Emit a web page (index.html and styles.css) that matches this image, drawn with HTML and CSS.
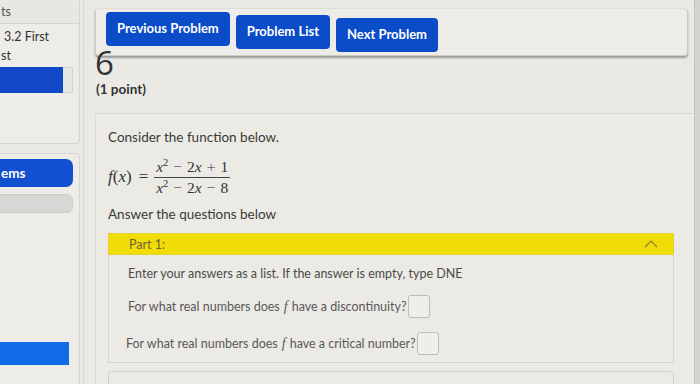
FILE: index.html
```html
<!DOCTYPE html>
<html lang="en">

<head>
  <meta charset="UTF-8" />
  <meta name="viewport" content="width=device-width, initial-scale=1.0" />
  <title>Problem 6</title>
  <link rel="stylesheet" href="styles.css">
</head>

<body>
  <div class="page">
    <div class="sidebar">
      <div class="side-panel first">
        <div class="side-head">ts</div>
        <div class="side-body">
          <p class="set-name"><span class="indent">3.2 First</span><br>st</p>
          <div class="progress">
            <div class="progress-bar"></div>
            <div class="progress-rest"></div>
          </div>
        </div>
      </div>
      <div class="side-panel second">
        <a class="side-btn" href="javascript:;">ems</a>
        <div class="side-grey"></div>
        <div class="side-space"></div>
        <div class="side-blue"></div>
      </div>
    </div>

    <div class="main">
      <div class="nav">
        <a class="btn" href="javascript:;">Previous Problem</a>
        <a class="btn" href="javascript:;">Problem List</a>
        <a class="btn" href="javascript:;">Next Problem</a>
      </div>
      <div class="num">6</div>
      <div class="points">(1 point)</div>

      <div class="problem">
        <p>Consider the function below.</p>
        <div class="formula">
          <span class="math">f</span>(<span class="math">x</span>)
          <span class="eq">=</span>
          <span class="frac">
            <span class="top"><span class="math">x</span><sup>2</sup><span class="op">&minus;</span>2<span class="math">x</span><span class="op">+</span>1</span>
            <span class="bot"><span class="math">x</span><sup>2</sup><span class="op">&minus;</span>2<span class="math">x</span><span class="op">&minus;</span>8</span>
          </span>
        </div>
        <p class="answer">Answer the questions below</p>

        <div class="part-head">
          <span>Part 1:</span>
          <svg class="chev" width="14" height="8" viewBox="0 0 14 8"><path d="M1 7 L7 1 L13 7" fill="none" stroke="#8a7f30" stroke-width="1.2"/></svg>
        </div>
        <div class="part-body">
          <p class="hint">Enter your answers as a list. If the answer is empty, type DNE</p>
          <p class="q">For what real numbers does <span class="math">f</span> have a discontinuity?<span class="box"></span></p>
          <p class="q q2">For what real numbers does <span class="math">f</span> have a critical number?<span class="box"></span></p>
        </div>
        <div class="part-next"></div>
      </div>
    </div>
    <div class="scroll"></div>
  </div>
</body>

</html>
```

FILE: styles.css
```css
* {
  margin: 0;
  padding: 0;
  box-sizing: border-box;
}

body {
  width: 700px;
  height: 384px;
  overflow: hidden;
  background: #ebe9e4;
  font-family: Lato, "Open Sans", sans-serif;
  color: #3a3a3a;
}

.page {
  display: flex;
  height: 384px;
}

/* left column */
.sidebar {
  width: 84px;
  flex-shrink: 0;
  overflow: hidden;
  border-right: 1px solid #d8d6d1;
  padding-right: 4px;
}

.side-panel {
  margin-left: -12px;
  width: 92px;
  background: #edece8;
  border: 1px solid #d6d4cf;
  border-radius: 4px;
}

.side-panel.first {
  height: 146px;
  margin-top: -2px;
}

.side-head {
  height: 25px;
  line-height: 26px;
  font-size: 12.5px;
  color: #555;
  border-bottom: 1px solid #d6d4cf;
  padding-left: 12px;
  background: #e8e7e2;
}

.side-body {
  padding: 3px 0 0 12px;
}

.set-name {
  font-size: 12.5px;
  line-height: 19px;
  color: #333;
  white-space: nowrap;
}

.set-name .indent {
  padding-left: 3px;
}

.progress {
  display: flex;
  margin: 2px 0 0 -12px;
  height: 26px;
}

.progress-bar {
  width: 74px;
  background: #1048c6;
}

.progress-rest {
  width: 10px;
  border: 1px solid #d4d2cd;
  border-left: none;
  background: #e6e5e1;
}

.side-panel.second {
  margin-top: 9px;
  height: 240px;
  padding-top: 5px;
}

.side-btn {
  display: block;
  width: 84px;
  height: 28px;
  line-height: 28px;
  border-radius: 0 7px 7px 0;
  background: #1150d0;
  color: #fff;
  font-weight: bold;
  font-size: 13.5px;
  text-decoration: none;
  padding-left: 12px;
}

.side-grey {
  width: 84px;
  height: 19px;
  margin-top: 7px;
  border-radius: 0 6px 6px 0;
  background: #d8d7d6;
  border: 1px solid #cfcdca;
}

.side-space {
  height: 129px;
}

.side-blue {
  width: 80px;
  height: 23px;
  background: #116ae6;
}

/* main area */
.main {
  flex: 1;
  padding: 8px 6px 0 11px;
}

.nav {
  display: flex;
  gap: 6px;
  align-items: center;
  height: 48px;
  padding: 0 0 0 10px;
  border: 1px solid #cdcbc6;
  border-top-color: #e0ded9;
  border-radius: 4px;
  background: #edece8;
  box-shadow: 0 2px 2px rgba(60, 60, 70, 0.45);
}

.btn {
  display: block;
  padding: 0 11px;
  height: 34px;
  line-height: 33px;
  background: #0b4cc8;
  color: #fff;
  font-size: 13px;
  font-weight: bold;
  text-decoration: none;
  border-radius: 4px;
}

.btn:nth-child(1) {
  margin-top: -6px;
}

.btn:nth-child(3) {
  margin-top: 6px;
}

.num {
  font-family: "Open Sans", sans-serif;
  font-size: 33px;
  line-height: 30px;
  height: 30px;
  margin-top: -8px;
  width: 24px;
  color: #333;
}

.points {
  font-size: 13.5px;
  font-weight: bold;
  color: #333;
  line-height: 19px;
  margin-top: 2px;
  padding-left: 1px;
}

.problem {
  margin-top: 14px;
  margin-right: -10px;
  border-top: 1px solid #d8d6d1;
  border-left: 1px solid #dcdad5;
  background: #eceae5;
  padding: 14px 24px 0 12px;
  height: 280px;
}

.problem p {
  font-size: 13.5px;
  line-height: 19px;
  color: #3a3a3a;
}

.formula {
  display: flex;
  align-items: center;
  font-family: "Liberation Serif", serif;
  font-size: 17px;
  margin-top: 10px;
  height: 40px;
  color: #333;
}

.math {
  font-style: italic;
  font-family: "Liberation Serif", serif;
}

.eq {
  margin: 0 6px 0 7px;
}

.frac {
  display: inline-flex;
  flex-direction: column;
  align-items: center;
  font-size: 15.5px;
  line-height: 18px;
}

.frac .top {
  padding: 0 2px 1px;
  border-bottom: 1px solid #444;
}

.frac .bot {
  padding: 1px 2px 0;
}

.frac sup {
  font-size: 10.5px;
  vertical-align: 6px;
  line-height: 0;
}

.op {
  color: #666;
  margin: 0 5px;
}

.problem .answer {
  margin-top: 8px;
}

.part-head {
  display: flex;
  justify-content: space-between;
  align-items: center;
  height: 22px;
  margin-top: 9px;
  padding: 0 15px 0 20px;
  background: #f2dc05;
  border: 1px solid #e2d23a;
  font-size: 12.5px;
  color: #6a6440;
}

.part-body {
  border: 1px solid #d6d4cf;
  border-top: none;
  height: 108px;
  padding: 10px 0 0 19px;
}

.problem .hint {
  font-size: 12.5px;
  line-height: 17px;
  color: #4a4a4a;
}

.problem .q {
  display: flex;
  align-items: center;
  font-size: 12.5px;
  color: #595959;
  margin-top: 13px;
}

.q .math {
  margin: 0 4px;
  font-size: 14px;
}

.problem .q2 {
  margin-top: 14px;
  margin-left: -2px;
}

.box {
  display: inline-block;
  width: 22px;
  height: 23px;
  margin-left: 1px;
  border: 1px solid #bdbcb8;
  border-radius: 3px;
  background: #efeeea;
}

.part-next {
  margin-top: 8px;
  border: 1px solid #d2d0cb;
  border-radius: 3px;
  height: 20px;
}

.scroll {
  width: 6px;
  flex-shrink: 0;
  background: #d5d4d1;
  border-left: 1px solid #c5c4c0;
}
```
